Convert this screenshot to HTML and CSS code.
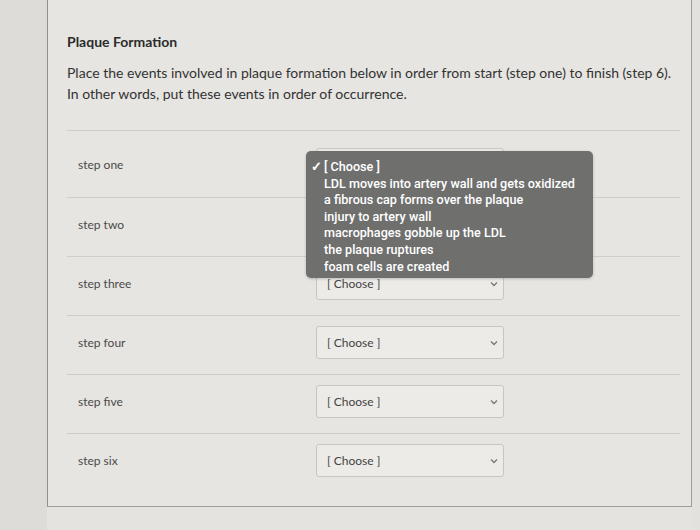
FILE: index.html
```html
<!DOCTYPE html>
<html>
<head>
<meta charset="utf-8">
<link rel="stylesheet" href="styles.css">
</head>
<body>
<div class="page">
  <div class="gutter"></div>
  <div class="card">
    <div class="header">
      <h2 class="title">Plaque Formation</h2>
      <p class="desc">Place the events involved in plaque formation below in order from start (step one) to finish (step 6). In other words, put these events in order of occurrence.</p>
    </div>
    <div class="rows">
      <div class="row first">
        <div class="label">step one</div>
        <div class="select-wrap">
          <div class="select"><span class="covered">[ Choose ]</span><svg class="chev" width="8" height="6" viewBox="0 0 8 6"><path d="M1 1.5 L4 4.5 L7 1.5" fill="none" stroke="#7a7a7a" stroke-width="1.4"/></svg></div>
          <div class="menu">
            <div class="item checked"><span class="check">✓</span>[ Choose ]</div>
            <div class="item">LDL moves into artery wall and gets oxidized</div>
            <div class="item">a fibrous cap forms over the plaque</div>
            <div class="item">injury to artery wall</div>
            <div class="item">macrophages gobble up the LDL</div>
            <div class="item">the plaque ruptures</div>
            <div class="item">foam cells are created</div>
          </div>
        </div>
      </div>
      <div class="row">
        <div class="label">step two</div>
        <div class="select-wrap"><div class="select"><span class="covered">[ Choose ]</span><svg class="chev" width="8" height="6" viewBox="0 0 8 6"><path d="M1 1.5 L4 4.5 L7 1.5" fill="none" stroke="#7a7a7a" stroke-width="1.4"/></svg></div></div>
      </div>
      <div class="row">
        <div class="label">step three</div>
        <div class="select-wrap"><div class="select"><span>[ Choose ]</span><svg class="chev" width="8" height="6" viewBox="0 0 8 6"><path d="M1 1.5 L4 4.5 L7 1.5" fill="none" stroke="#7a7a7a" stroke-width="1.4"/></svg></div></div>
      </div>
      <div class="row">
        <div class="label">step four</div>
        <div class="select-wrap"><div class="select"><span>[ Choose ]</span><svg class="chev" width="8" height="6" viewBox="0 0 8 6"><path d="M1 1.5 L4 4.5 L7 1.5" fill="none" stroke="#7a7a7a" stroke-width="1.4"/></svg></div></div>
      </div>
      <div class="row">
        <div class="label">step five</div>
        <div class="select-wrap"><div class="select"><span>[ Choose ]</span><svg class="chev" width="8" height="6" viewBox="0 0 8 6"><path d="M1 1.5 L4 4.5 L7 1.5" fill="none" stroke="#7a7a7a" stroke-width="1.4"/></svg></div></div>
      </div>
      <div class="row last">
        <div class="label">step six</div>
        <div class="select-wrap"><div class="select"><span>[ Choose ]</span><svg class="chev" width="8" height="6" viewBox="0 0 8 6"><path d="M1 1.5 L4 4.5 L7 1.5" fill="none" stroke="#7a7a7a" stroke-width="1.4"/></svg></div></div>
      </div>
    </div>
  </div>
  <div class="right"></div>
</div>
</body>
</html>
```

FILE: styles.css
```css
html, body {
  margin: 0;
  padding: 0;
}
body {
  background: #e4e3df;
  font-family: Lato, "Liberation Sans", sans-serif;
  color: #2f2f2f;
  width: 700px;
  height: 530px;
  overflow: hidden;
}
.page {
  display: flex;
  height: 530px;
}
.gutter {
  width: 47px;
  flex: none;
  background: #dddcd8;
}
.card {
  width: 645px;
  flex: none;
  height: 507px;
  border-left: 1px solid #8f8f8c;
  border-right: 1px solid #9d9d9a;
  border-bottom: 1px solid #9d9d9a;
  background: #e6e5e1;
  box-sizing: border-box;
  padding: 0 11px 0 19px;
}
.right {
  flex: 1;
  background: #e2e1dd;
}
.header {
  padding-top: 33px;
  border-bottom: 1px solid #cfcecb;
  padding-bottom: 26px;
}
.title {
  margin: 0;
  font-size: 14px;
  font-weight: 700;
  color: #2c2c2c;
  line-height: 18px;
}
.desc {
  margin: 11px 0 0;
  font-size: 14px;
  line-height: 21px;
  color: #333;
  width: 612px;
}
.rows {
  padding-top: 9px;
}
.row {
  display: flex;
  align-items: center;
  padding: 10px 0 15px;
  border-bottom: 1px solid #cfcecb;
}
.row.first {
  padding-top: 8px;
  padding-bottom: 16px;
}
.row.last {
  border-bottom: none;
}
.label {
  width: 237px;
  padding-left: 11px;
  font-size: 12px;
  color: #4a4a4a;
  flex: none;
}
.select-wrap {
  position: relative;
  margin-left: 1px;
}
.select {
  width: 188px;
  height: 33px;
  box-sizing: border-box;
  border: 1px solid #c7c6c2;
  border-radius: 3px;
  background: #ecebe7;
  display: flex;
  align-items: center;
  justify-content: space-between;
  padding: 0 5px 0 10px;
  font-size: 12px;
  color: #444;
}
.covered {
  visibility: hidden;
}
.chev {
  display: block;
}
.menu {
  position: absolute;
  left: -10px;
  top: 3px;
  width: 287px;
  box-sizing: border-box;
  background: #6f6f6e;
  border-radius: 5px;
  padding: 8px 0 3px;
  font-family: Roboto, "Noto Sans", sans-serif;
  font-size: 12.6px;
  font-weight: 500;
  line-height: 16.6px;
  color: #ffffff;
  z-index: 5;
  box-shadow: 0 1px 3px rgba(0,0,0,0.2);
}
.item {
  padding-left: 18px;
  white-space: nowrap;
  position: relative;
}
.check {
  position: absolute;
  left: 5px;
  top: 0;
  font-size: 13px;
  font-weight: 700;
}
```
